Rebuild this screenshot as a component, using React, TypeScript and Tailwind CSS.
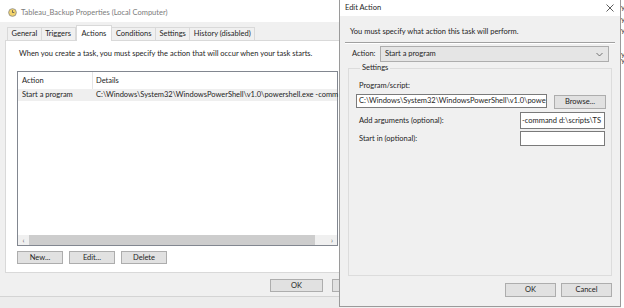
import React from "react";

const tabs = ["General", "Triggers", "Actions", "Conditions", "Settings", "History (disabled)"];

function Btn({ label, className = "" }: { label?: string; className?: string }) {
  return (
    <div
      className={`flex items-center justify-center border border-[#adadad] bg-[#e1e1e1] text-[#1e1e1e] ${className}`}
    >
      {label}
    </div>
  );
}

function PropertiesWindow() {
  return (
    <div className="flex h-full w-[339px] shrink-0 flex-col overflow-hidden">
      {/* title bar */}
      <div className="flex h-[22px] shrink-0 items-center gap-[4px] bg-white pl-[8px] pt-[3px]">
        <svg width="9" height="9" viewBox="0 0 10 10" aria-hidden="true">
          <circle cx="5" cy="5" r="4.3" fill="#f3d36b" stroke="#8a8a8a" strokeWidth="0.9" />
          <path d="M5 2.4V5h2" stroke="#555" strokeWidth="0.9" fill="none" />
        </svg>
        <span className="text-[#7b7b7b]">Tableau_Backup Properties (Local Computer)</span>
      </div>

      {/* tabs */}
      <div className="flex h-[18px] shrink-0 items-end bg-[#f0f0f0] pl-[7px]">
        {tabs.map((t) =>
          t === "Actions" ? (
            <div
              key={t}
              className="relative z-10 -mb-px flex h-[16px] items-center border-x border-t border-[#d9d9d9] bg-white px-[5px]"
            >
              {t}
            </div>
          ) : (
            <div
              key={t}
              className="flex h-[13px] items-center border-t border-r border-[#d9d9d9] bg-[#f0f0f0] px-[3.5px] first:border-l"
            >
              {t}
            </div>
          )
        )}
      </div>

      {/* panel */}
      <div className="flex shrink-0 bg-[#f0f0f0] pl-[5px]">
        <div className="flex h-[233px] w-[345px] shrink-0 flex-col border border-[#d9d9d9] bg-white pl-[11px]">
          <p className="mt-[8px] h-[10px] pl-[2px] leading-[10px]">
            When you create a task, you must specify the action that will occur when your task starts.
          </p>

          {/* list view */}
          <div className="mt-[12px] flex h-[175px] w-[321px] flex-col border border-[#828790] bg-white">
            <div className="flex h-[17px] shrink-0 items-center">
              <div className="flex h-full w-[75px] items-center border-r border-[#e5e5e5] pl-[4px]">Action</div>
              <div className="pl-[3px]">Details</div>
            </div>
            <div className="flex h-[12px] shrink-0 items-center whitespace-nowrap bg-[#efefef]">
              <div className="w-[75px] shrink-0 pl-[4px]">Start a program</div>
              <div className="pl-[3px]">C:\Windows\System32\WindowsPowerShell\v1.0\powershell.exe -comm</div>
            </div>
            <div className="flex-1" />
            {/* horizontal scrollbar */}
            <div className="flex h-[10px] shrink-0 items-center bg-[#f0f0f0] text-[7px] text-[#606060]">
              <div className="flex w-[11px] justify-center">&lsaquo;</div>
              <div className="h-full w-[286px] bg-[#cdcdcd]" />
              <div className="flex-1" />
              <div className="flex w-[10px] justify-center">&rsaquo;</div>
            </div>
          </div>

          <div className="mt-[5px] flex gap-[6px]">
            <Btn label="New..." className="h-[13px] w-[46px]" />
            <Btn label="Edit..." className="h-[13px] w-[46px]" />
            <Btn label="Delete" className="h-[13px] w-[46px]" />
          </div>
        </div>
      </div>

      {/* bottom buttons */}
      <div className="flex h-[24px] shrink-0 items-start gap-[9px] border-b border-[#d4d4d4] bg-[#f0f0f0] pl-[270px] pt-[6px]">
        <Btn label="OK" className="h-[13px] w-[53px] shrink-0 border-[#0078d7]" />
        <Btn className="h-[13px] w-[53px] shrink-0" />
      </div>
      <div className="flex-1 bg-[#ececec]" />
    </div>
  );
}

function EditActionDialog() {
  return (
    <div className="flex h-[307px] w-[282px] shrink-0 flex-col border-x border-b border-[#9a9a9a] bg-[#f0f0f0]">
      <div className="flex h-[16px] shrink-0 items-center justify-between bg-white pl-[5px] pr-[6px]">
        <span>Edit Action</span>
        <svg width="8" height="8" viewBox="0 0 8 8" aria-hidden="true">
          <path d="M0.5 0.5L7.5 7.5M7.5 0.5L0.5 7.5" stroke="#333" strokeWidth="0.8" />
        </svg>
      </div>

      <p className="mt-[11px] pl-[10px] leading-[10px]">You must specify what action this task will perform.</p>
      <div className="mx-[5px] mt-[5px] h-[2px] border-t border-b border-t-[#a0a0a0] border-b-white" />

      <div className="mt-[2px] flex h-[16px] items-center pl-[12px]">
        <span className="w-[28px]">Action:</span>
        <div className="flex h-full w-[229px] items-center justify-between border border-[#adadad] bg-[#e5e5e5] pl-[4px] pr-[5px]">
          <span>Start a program</span>
          <svg width="7" height="5" viewBox="0 0 7 5" aria-hidden="true">
            <path d="M0.5 1L3.5 4L6.5 1" stroke="#555" strokeWidth="0.8" fill="none" />
          </svg>
        </div>
      </div>

      <fieldset className="mx-[8px] mt-[1px] h-[213px] border border-[#dcdcdc] pl-[7px]">
        <legend className="ml-[4px] px-[2px] leading-[10px]">Settings</legend>
        <div className="mt-[8px] pl-[3px] leading-[10px]">Program/script:</div>
        <div className="mt-[3px] flex items-start gap-[7px]">
          <div className="flex h-[14px] w-[191px] items-center whitespace-nowrap border border-[#7a7a7a] bg-white pl-[2px]">
            C:\Windows\System32\WindowsPowerShell\v1.0\powe
          </div>
          <Btn label="Browse..." className="mt-[1px] h-[14px] w-[52px]" />
        </div>
        <div className="mt-[3px] flex h-[17px] items-center justify-between pr-[6px]">
          <span className="pl-[3px]">Add arguments (optional):</span>
          <div className="flex h-full w-[85px] items-center whitespace-nowrap border border-[#7a7a7a] bg-white pl-[1px]">
            -command d:\scripts\TS
          </div>
        </div>
        <div className="mt-[2px] flex h-[15px] items-center justify-between pr-[6px]">
          <span className="pl-[3px]">Start in (optional):</span>
          <div className="h-full w-[85px] border border-[#7a7a7a] bg-white" />
        </div>
      </fieldset>

      <div className="mt-[7px] flex justify-end gap-[5px] pr-[8px]">
        <Btn label="OK" className="h-[14px] w-[51px] border-[#0078d7]" />
        <Btn label="Cancel" className="h-[14px] w-[51px]" />
      </div>
    </div>
  );
}

export default function App() {
  return (
    <div className="flex h-[308px] w-[624px] overflow-hidden bg-[#f0f0f0] font-['Lato',sans-serif] text-[7.5px] leading-none text-[#1e1e1e]">
      <PropertiesWindow />
      <EditActionDialog />
      <div className="flex w-[3px] shrink-0 flex-col overflow-hidden bg-white text-[8px] leading-[8px] text-[#333]">
        <span className="mt-[3px]">y</span>
        <span className="mt-[4px]">y</span>
        <span className="mt-[3px]">y</span>
        <span className="mt-[16px]">y</span>
        <span className="mt-[-2px]">y</span>
      </div>
    </div>
  );
}
